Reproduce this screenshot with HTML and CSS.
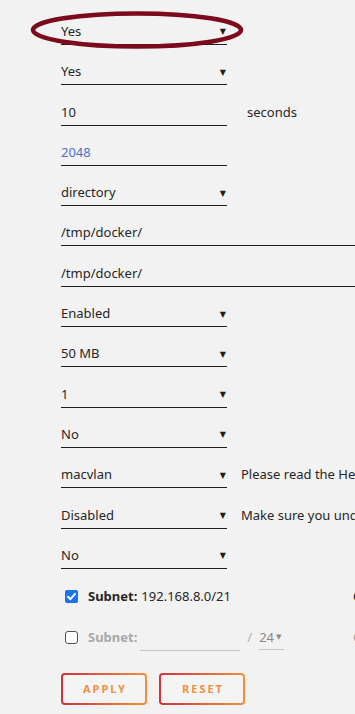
FILE: index.html
```html
<!DOCTYPE html>
<html>
<head>
<meta charset="utf-8">
<link rel="stylesheet" href="styles.css">
</head>
<body>
<div class="page">
  <svg class="mark" width="222" height="44" viewBox="0 0 222 44">
    <ellipse cx="111" cy="20" rx="104" ry="16.5" fill="none" stroke="#7b0a1c" stroke-width="4.5"/>
  </svg>
  <div class="form">
    <div class="row"><div class="field"><span>Yes</span><span class="tri">▼</span></div></div>
    <div class="row"><div class="field"><span>Yes</span><span class="tri">▼</span></div></div>
    <div class="row"><div class="field"><span>10</span></div><span class="note sec">seconds</span></div>
    <div class="row"><div class="field"><span class="blue">2048</span></div></div>
    <div class="row"><div class="field"><span>directory</span><span class="tri">▼</span></div></div>
    <div class="row"><div class="field wide"><span>/tmp/docker/</span></div></div>
    <div class="row"><div class="field wide"><span>/tmp/docker/</span></div></div>
    <div class="row"><div class="field"><span>Enabled</span><span class="tri">▼</span></div></div>
    <div class="row"><div class="field"><span>50 MB</span><span class="tri">▼</span></div></div>
    <div class="row"><div class="field"><span>1</span><span class="tri">▼</span></div></div>
    <div class="row"><div class="field"><span>No</span><span class="tri">▼</span></div></div>
    <div class="row"><div class="field"><span>macvlan</span><span class="tri">▼</span></div><span class="note">Please read the Help text for this option</span></div>
    <div class="row"><div class="field"><span>Disabled</span><span class="tri">▼</span></div><span class="note">Make sure you understand the consequences</span></div>
    <div class="row"><div class="field"><span>No</span><span class="tri">▼</span></div></div>
  </div>
  <div class="subnets">
    <div class="srow">
      <span class="cb on"><svg width="13" height="13" viewBox="0 0 13 13"><path d="M3 6.8 L5.4 9.2 L10 3.8" fill="none" stroke="#fff" stroke-width="2" stroke-linecap="round" stroke-linejoin="round"/></svg></span>
      <div class="scol"><b>Subnet:</b> 192.168.8.0/21</div>
      <b class="gw">Gateway: 192.168.8.1</b>
    </div>
    <div class="srow dim">
      <span class="cb"></span>
      <div class="scol"><b>Subnet:</b><span class="sin"></span><span class="slash">/</span><span class="mask">24<span class="tri2">▼</span></span></div>
      <b class="gw">Gateway:</b>
    </div>
  </div>
  <div class="buttons">
    <button class="btn">APPLY</button>
    <button class="btn">RESET</button>
  </div>
</div>
</body>
</html>
```
FILE: styles.css
```css
html, body {
  margin: 0;
  padding: 0;
  background: #f2f2f2;
  overflow: hidden;
}
body {
  font-family: "Noto Sans", "DejaVu Sans", sans-serif;
  font-size: 13px;
  color: #262626;
}
.page {
  position: relative;
  width: 355px;
  height: 714px;
  overflow: hidden;
}
.mark {
  position: absolute;
  left: 26px;
  top: 10px;
  z-index: 2;
}
.form {
  padding-top: 4.7px;
  padding-left: 61px;
}
.row {
  height: 40.3px;
  display: flex;
  align-items: flex-end;
  white-space: nowrap;
}
.field {
  width: 166px;
  height: 26px;
  border-bottom: 1px solid #1e1e1e;
  display: flex;
  align-items: center;
  justify-content: space-between;
  flex-shrink: 0;
  box-sizing: content-box;
}
.field.wide {
  width: 320px;
}
.tri {
  font-size: 8px;
  margin-right: 1px;
  color: #1e1e1e;
}
.blue {
  color: #4a72c4;
}
.note {
  height: 26px;
  line-height: 26px;
  margin-left: 14px;
  align-self: flex-end;
  margin-bottom: 1px;
}
.note.sec {
  margin-left: 20px;
}
.subnets {
  padding-left: 65px;
  padding-top: 7px;
}
.srow {
  display: flex;
  align-items: center;
  height: 41px;
  white-space: nowrap;
}
.cb {
  width: 13px;
  height: 13px;
  border-radius: 3px;
  box-sizing: border-box;
  border: 1.5px solid #4a4a4a;
  background: #fff;
  flex-shrink: 0;
  display: flex;
}
.cb.on {
  background: #1a73e8;
  border: none;
  border-radius: 2px;
}
.scol {
  width: 265px;
  margin-left: 10px;
  flex-shrink: 0;
  display: flex;
  align-items: center;
}
.scol b {
  margin-right: 4px;
}
.gw {
  flex-shrink: 0;
}
.dim {
  color: #a8a8a8;
}
.dim .cb {
  border-color: #505050;
}
.dim .scol b {
  margin-right: 0;
}
.sin {
  width: 100px;
  height: 26px;
  margin-left: 3px;
  border-bottom: 1px solid #c4c4c4;
}
.slash {
  margin-left: 7px;
  color: #b0b0b0;
}
.mask {
  margin-left: 7px;
  width: 25px;
  height: 25px;
  border-bottom: 1px solid #c4c4c4;
  color: #8a8a8a;
  display: flex;
  align-items: center;
}
.tri2 {
  font-size: 7px;
  margin-left: 2px;
}
.buttons {
  padding-left: 61px;
  padding-top: 15px;
  display: flex;
  gap: 12px;
}
.btn {
  width: 86px;
  height: 32px;
  border: 2px solid transparent;
  border-radius: 4px;
  background: linear-gradient(#f4f4f4, #f4f4f4) padding-box,
              linear-gradient(90deg, #d2303a, #f0903e) border-box;
  color: #f0903e;
  font-family: "Noto Sans", "DejaVu Sans", sans-serif;
  font-weight: bold;
  font-size: 11px;
  letter-spacing: 2px;
  padding: 0;
  text-indent: 2px;
}
```
